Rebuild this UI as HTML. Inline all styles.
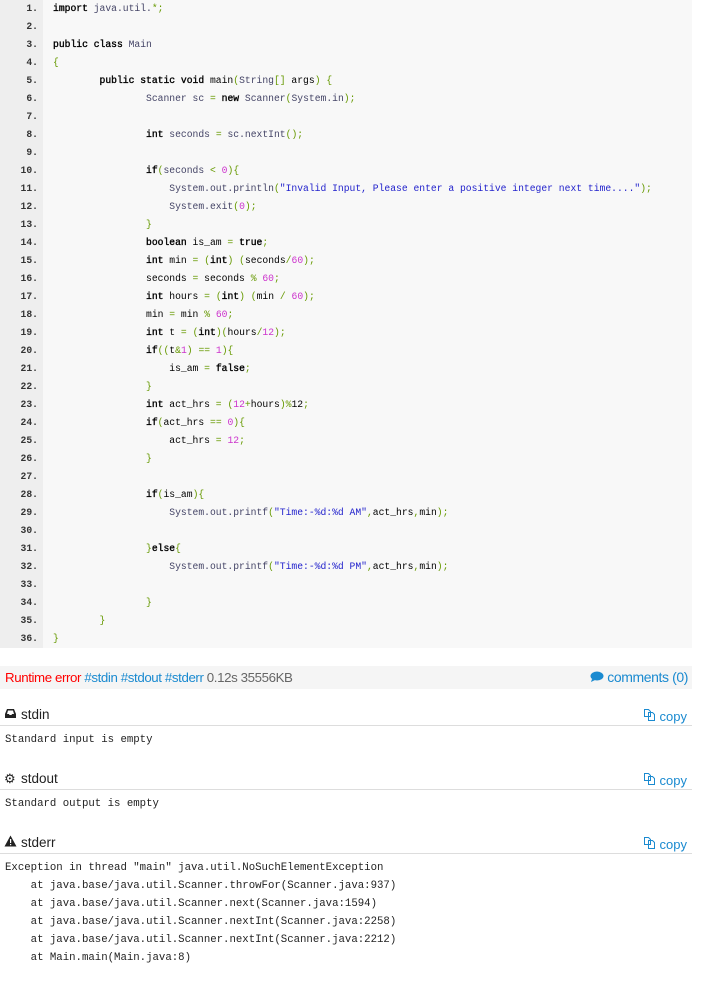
<!DOCTYPE html>
<html><head><meta charset="utf-8"><style>
body{margin:0;background:#fff;width:704px;height:982px;overflow:hidden;font-family:"Liberation Sans",sans-serif}
.code{position:absolute;left:0;top:0;width:692px;height:648px;background:#f8f8f8}
.gut{position:absolute;left:0;top:0;width:43px;height:648px;background:#eee}
.ln{position:absolute;left:0;width:38px;text-align:right;font:bold 9.7px/18px "Liberation Mono",monospace;color:#333}
.cl{position:absolute;left:53px;font:9.7px/18px "Liberation Mono",monospace;white-space:pre;color:#000}
.k{color:#000;-webkit-text-stroke:0.35px #000}.t{color:#446}.n{color:#c3c}.s{color:#22c}.p{color:#690}
.bar{position:absolute;left:0;top:666px;width:692px;height:23px;background:#f5f5f5;font-size:13.3px;line-height:23px;color:#666;letter-spacing:-0.4px}
.bar .r{color:#f00;padding-left:5px}.bar a,.bl{color:#1a8ad0;text-decoration:none}
.h{position:absolute;left:0;width:692px;height:20px;border-bottom:1px solid #ddd;font-size:13.5px;line-height:20px;color:#222}
.h .ic{display:inline-block;width:17px;padding-left:4px}
.cp{position:absolute;right:5px;top:2px;color:#1a8ad0;font-size:13px}
.o{position:absolute;left:5px;font:10.7px/18px "Liberation Mono",monospace;white-space:pre;color:#222}
</style></head><body>
<div class="code"><div class="gut"></div>
<div class="ln" style="top:0">1.</div><div class="ln" style="top:18px">2.</div><div class="ln" style="top:36px">3.</div><div class="ln" style="top:54px">4.</div><div class="ln" style="top:72px">5.</div><div class="ln" style="top:90px">6.</div><div class="ln" style="top:108px">7.</div><div class="ln" style="top:126px">8.</div><div class="ln" style="top:144px">9.</div><div class="ln" style="top:162px">10.</div><div class="ln" style="top:180px">11.</div><div class="ln" style="top:198px">12.</div><div class="ln" style="top:216px">13.</div><div class="ln" style="top:234px">14.</div><div class="ln" style="top:252px">15.</div><div class="ln" style="top:270px">16.</div><div class="ln" style="top:288px">17.</div><div class="ln" style="top:306px">18.</div><div class="ln" style="top:324px">19.</div><div class="ln" style="top:342px">20.</div><div class="ln" style="top:360px">21.</div><div class="ln" style="top:378px">22.</div><div class="ln" style="top:396px">23.</div><div class="ln" style="top:414px">24.</div><div class="ln" style="top:432px">25.</div><div class="ln" style="top:450px">26.</div><div class="ln" style="top:468px">27.</div><div class="ln" style="top:486px">28.</div><div class="ln" style="top:504px">29.</div><div class="ln" style="top:522px">30.</div><div class="ln" style="top:540px">31.</div><div class="ln" style="top:558px">32.</div><div class="ln" style="top:576px">33.</div><div class="ln" style="top:594px">34.</div><div class="ln" style="top:612px">35.</div><div class="ln" style="top:630px">36.</div>
<div class="cl" style="top:0"><span class="k">import</span> <span class="t">java.util.</span><span class="p">*;</span></div>
<div class="cl" style="top:36px"><span class="k">public class</span> <span class="t">Main</span></div>
<div class="cl" style="top:54px"><span class="p">{</span></div>
<div class="cl" style="top:72px">        <span class="k">public static void</span> main<span class="p">(</span><span class="t">String</span><span class="p">[]</span> args<span class="p">)</span> <span class="p">{</span></div>
<div class="cl" style="top:90px">                <span class="t">Scanner sc</span> <span class="p">=</span> <span class="k">new</span> <span class="t">Scanner</span><span class="p">(</span><span class="t">System.in</span><span class="p">);</span></div>
<div class="cl" style="top:126px">                <span class="k">int</span> <span class="t">seconds</span> <span class="p">=</span> <span class="t">sc.nextInt</span><span class="p">();</span></div>
<div class="cl" style="top:162px">                <span class="k">if</span><span class="p">(</span><span class="t">seconds</span> <span class="p">&lt;</span> <span class="n">0</span><span class="p">){</span></div>
<div class="cl" style="top:180px">                    <span class="t">System.out.println</span><span class="p">(</span><span class="s">"Invalid Input, Please enter a positive integer next time...."</span><span class="p">);</span></div>
<div class="cl" style="top:198px">                    <span class="t">System.exit</span><span class="p">(</span><span class="n">0</span><span class="p">);</span></div>
<div class="cl" style="top:216px">                <span class="p">}</span></div>
<div class="cl" style="top:234px">                <span class="k">boolean</span> is_am <span class="p">=</span> <span class="k">true</span><span class="p">;</span></div>
<div class="cl" style="top:252px">                <span class="k">int</span> min <span class="p">=</span> <span class="p">(</span><span class="k">int</span><span class="p">)</span> <span class="p">(</span>seconds<span class="p">/</span><span class="n">60</span><span class="p">);</span></div>
<div class="cl" style="top:270px">                seconds <span class="p">=</span> seconds <span class="p">%</span> <span class="n">60</span><span class="p">;</span></div>
<div class="cl" style="top:288px">                <span class="k">int</span> hours <span class="p">=</span> <span class="p">(</span><span class="k">int</span><span class="p">)</span> <span class="p">(</span>min <span class="p">/</span> <span class="n">60</span><span class="p">);</span></div>
<div class="cl" style="top:306px">                min <span class="p">=</span> min <span class="p">%</span> <span class="n">60</span><span class="p">;</span></div>
<div class="cl" style="top:324px">                <span class="k">int</span> t <span class="p">=</span> <span class="p">(</span><span class="k">int</span><span class="p">)(</span>hours<span class="p">/</span><span class="n">12</span><span class="p">);</span></div>
<div class="cl" style="top:342px">                <span class="k">if</span><span class="p">((</span>t<span class="p">&amp;</span><span class="n">1</span><span class="p">)</span> <span class="p">==</span> <span class="n">1</span><span class="p">){</span></div>
<div class="cl" style="top:360px">                    is_am <span class="p">=</span> <span class="k">false</span><span class="p">;</span></div>
<div class="cl" style="top:378px">                <span class="p">}</span></div>
<div class="cl" style="top:396px">                <span class="k">int</span> act_hrs <span class="p">=</span> <span class="p">(</span><span class="n">12</span><span class="p">+</span>hours<span class="p">)%</span>12<span class="p">;</span></div>
<div class="cl" style="top:414px">                <span class="k">if</span><span class="p">(</span>act_hrs <span class="p">==</span> <span class="n">0</span><span class="p">){</span></div>
<div class="cl" style="top:432px">                    act_hrs <span class="p">=</span> <span class="n">12</span><span class="p">;</span></div>
<div class="cl" style="top:450px">                <span class="p">}</span></div>
<div class="cl" style="top:486px">                <span class="k">if</span><span class="p">(</span>is_am<span class="p">){</span></div>
<div class="cl" style="top:504px">                    <span class="t">System.out.printf</span><span class="p">(</span><span class="s">"Time:-%d:%d AM"</span><span class="p">,</span>act_hrs<span class="p">,</span>min<span class="p">);</span></div>
<div class="cl" style="top:540px">                <span class="p">}</span><span class="k">else</span><span class="p">{</span></div>
<div class="cl" style="top:558px">                    <span class="t">System.out.printf</span><span class="p">(</span><span class="s">"Time:-%d:%d PM"</span><span class="p">,</span>act_hrs<span class="p">,</span>min<span class="p">);</span></div>
<div class="cl" style="top:594px">                <span class="p">}</span></div>
<div class="cl" style="top:612px">        <span class="p">}</span></div>
<div class="cl" style="top:630px"><span class="p">}</span></div>
</div>
<div class="bar"><span class="r">Runtime error</span> <a>#stdin</a> <a>#stdout</a> <a>#stderr</a> 0.12s 35556KB
<span style="position:absolute;right:4px;top:0;color:#1a8ad0;font-size:14px"><svg width="14" height="12" viewBox="0 0 14 12" style="vertical-align:-1px"><ellipse cx="7" cy="5" rx="6.5" ry="4.5" fill="#1a8ad0"/><path d="M2 8 L1 11 L5 9z" fill="#1a8ad0"/></svg> comments (0)</span></div>

<div class="h" style="top:705px"><span class="ic"><svg width="13" height="11" viewBox="0 0 13 11"><path d="M1 6 L3 1 H10 L12 6 V10 H1z" fill="#222"/><path d="M3 6 H5 L5.5 7 H7.5 L8 6 H10 L9 2.5 H4z" fill="#fff"/></svg></span>stdin<span class="cp"><svg width="13" height="13" viewBox="0 0 13 13" fill="none" stroke="#1a8ad0"><path d="M1.5 1.5h4l2 2v5h-6z M5.5 4.5h4l2 2v6h-6z"/></svg> copy</span></div>
<div class="o" style="top:731px">Standard input is empty</div>
<div class="h" style="top:769px"><span class="ic" style="color:#222;font-size:13px">&#9881;</span>stdout<span class="cp"><svg width="13" height="13" viewBox="0 0 13 13" fill="none" stroke="#1a8ad0"><path d="M1.5 1.5h4l2 2v5h-6z M5.5 4.5h4l2 2v6h-6z"/></svg> copy</span></div>
<div class="o" style="top:795px">Standard output is empty</div>
<div class="h" style="top:833px"><span class="ic"><svg width="13" height="12" viewBox="0 0 13 12"><path d="M6.5 0.5 L12.5 11.5 H0.5z" fill="#222"/><rect x="6" y="4" width="1.2" height="4" fill="#fff"/><rect x="6" y="9" width="1.2" height="1.2" fill="#fff"/></svg></span>stderr<span class="cp"><svg width="13" height="13" viewBox="0 0 13 13" fill="none" stroke="#1a8ad0"><path d="M1.5 1.5h4l2 2v5h-6z M5.5 4.5h4l2 2v6h-6z"/></svg> copy</span></div>
<div class="o" style="top:859px">Exception in thread "main" java.util.NoSuchElementException
    at java.base/java.util.Scanner.throwFor(Scanner.java:937)
    at java.base/java.util.Scanner.next(Scanner.java:1594)
    at java.base/java.util.Scanner.nextInt(Scanner.java:2258)
    at java.base/java.util.Scanner.nextInt(Scanner.java:2212)
    at Main.main(Main.java:8)</div>
</body></html>
